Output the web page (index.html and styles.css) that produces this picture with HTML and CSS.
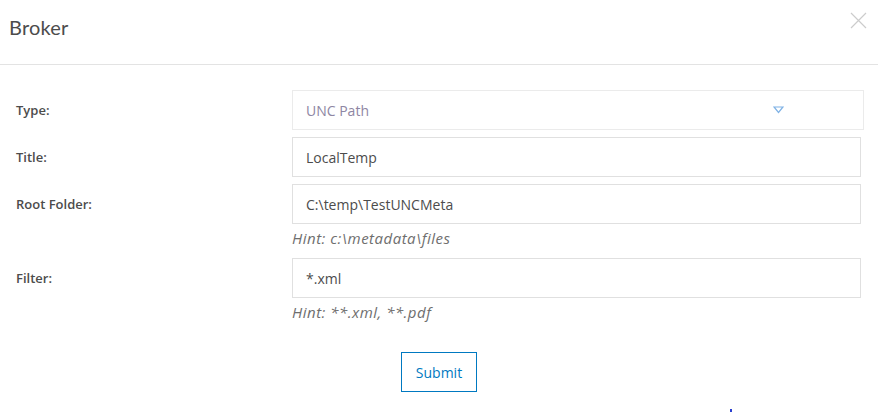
FILE: index.html
```html
<!DOCTYPE html>
<html lang="en">
<head>
<meta charset="utf-8">
<title>Broker</title>
<link rel="stylesheet" href="styles.css">
</head>
<body>
<div class="dialog">
  <header class="dialog-header">
    <h1 class="dialog-title">Broker</h1>
    <button class="close-btn" aria-label="Close">
      <svg width="17" height="17" viewBox="0 0 17 17"><path d="M1 1 L16 16 M16 1 L1 16" stroke="#cccccc" stroke-width="1.2" fill="none"/></svg>
    </button>
  </header>
  <form class="form">
    <div class="label">Type:</div>
    <div class="field">
      <div class="select">
        <span class="select-value">UNC Path</span>
        <svg class="select-arrow" width="11" height="8" viewBox="0 0 11 8"><path d="M1 1 H10 L5.5 6.5 Z" fill="none" stroke="#7fb2e5" stroke-width="1.2" stroke-linejoin="miter"/></svg>
      </div>
    </div>

    <div class="label">Title:</div>
    <div class="field">
      <div class="input">LocalTemp</div>
    </div>

    <div class="label">Root Folder:</div>
    <div class="field">
      <div class="input">C:\temp\TestUNCMeta</div>
      <div class="hint">Hint: c:\metadata\files</div>
    </div>

    <div class="label">Filter:</div>
    <div class="field">
      <div class="input">*.xml</div>
      <div class="hint">Hint: **.xml, **.pdf</div>
    </div>
  </form>
  <div class="actions">
    <button class="submit" type="button">Submit</button>
  </div>
  <span class="dot"></span>
</div>
</body>
</html>
```

FILE: styles.css
```css
html, body {
  margin: 0;
  padding: 0;
  background: #ffffff;
}
body {
  font-family: "Open Sans", "Lato", sans-serif;
  color: #4c4c4c;
}
.dialog {
  position: relative;
  width: 878px;
  height: 412px;
  overflow: hidden;
}
.dialog-header {
  height: 64px;
  border-bottom: 1px solid #e3e3e3;
  display: flex;
  justify-content: space-between;
  align-items: flex-start;
  padding: 0 11px 0 9px;
}
.dialog-title {
  margin: 0;
  padding-top: 14px;
  font-family: "Lato", sans-serif;
  font-size: 20px;
  letter-spacing: 0.2px;
  line-height: 26px;
  font-weight: 400;
  color: #4c4c4c;
}
.close-btn {
  margin-top: 12px;
  border: 0;
  padding: 0;
  background: none;
  width: 17px;
  height: 17px;
  display: block;
}
.close-btn svg { display: block; }
.form {
  display: grid;
  grid-template-columns: 276px 572px;
  row-gap: 7px;
  padding: 25px 0 0 16px;
}
.label {
  height: 40px;
  display: flex;
  align-items: center;
  font-size: 13px;
  font-weight: 600;
  color: #4c4c4c;
}
.field {
  display: flex;
  flex-direction: column;
}
.select {
  box-sizing: border-box;
  height: 40px;
  width: 572px;
  border: 1px solid #ebebeb;
  display: flex;
  align-items: center;
  padding-left: 13px;
}
.select-value {
  font-size: 14px;
  color: #8e86a3;
  flex: 1;
}
.select-arrow {
  margin-right: 79px;
  margin-top: -1px;
}
.input {
  box-sizing: border-box;
  height: 40px;
  width: 569px;
  border: 1px solid #e0e0e0;
  display: flex;
  align-items: center;
  padding-left: 13px;
  font-size: 14px;
  color: #4c4c4c;
}
.hint {
  margin: 3px 0 2px;
  line-height: 22px;
  font-size: 15px;
  letter-spacing: 0.5px;
  font-style: italic;
  color: #6e6e6e;
}
.actions {
  display: flex;
  justify-content: center;
  padding-top: 27px;
}
.submit {
  box-sizing: border-box;
  width: 76px;
  height: 40px;
  border: 1px solid #0079c1;
  background: #ffffff;
  color: #0079c1;
  font-family: "Open Sans", "Lato", sans-serif;
  font-size: 14px;
  padding: 0;
}
.dot {
  position: absolute;
  left: 730px;
  top: 409px;
  width: 2px;
  height: 3px;
  background: #2a3fd0;
}
```
